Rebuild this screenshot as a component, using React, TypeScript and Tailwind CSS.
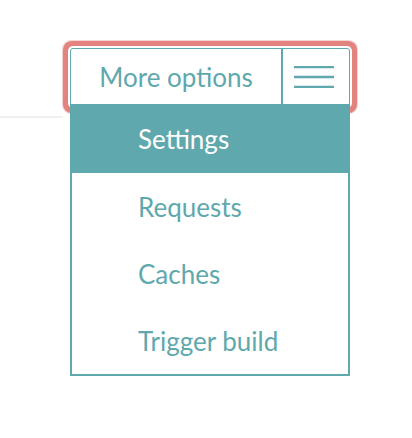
import React, { useState } from "react";

const items = ["Settings", "Requests", "Caches", "Trigger build"];

const HamburgerIcon = () => (
    <svg width="40" height="22" viewBox="0 0 40 22" fill="none">
        <path
            d="M0 1H40M0 11H40M0 21H40"
            stroke="#5fa8ad"
            strokeWidth="2.4"
        />
    </svg>
);

const App = () => {
    const [active, setActive] = useState("Settings");

    return (
        <div
            className="min-h-screen bg-white"
            style={{ fontFamily: "Lato, 'Open Sans', sans-serif" }}
        >
            <div className="flex items-start pt-[48px]">
                <div className="w-[63px] h-[2px] bg-[#f0f0f0] mt-[68px]" />
                <div className="relative ml-[7px]">
                    <div className="flex h-[58px] w-[280px] rounded-[3px] border border-[#5fa8ad] bg-white shadow-[0_0_0_2px_#ffffff,0_0_0_7px_#e2837f,0_0_0_8px_rgba(226,131,127,0.35)]">
                        <button className="flex-1 text-[26px] text-[#5fa8ad] leading-none">
                            More options
                        </button>
                        <button className="w-[68px] flex items-center justify-center border-l-2 border-[#5fa8ad] pr-[4px]">
                            <HamburgerIcon />
                        </button>
                    </div>
                    <div className="absolute left-0 top-[56px] w-[280px] border-2 border-t-0 border-[#5fa8ad] bg-white">
                        {items.map((item, i) => (
                            <button
                                key={item}
                                onClick={() => setActive(item)}
                                className={`flex w-full items-center pl-[66px] text-[26px] leading-none ${
                                    i === 0 ? "h-[69px]" : "h-[67px]"
                                } ${
                                    active === item
                                        ? "bg-[#5fa8ad] text-white"
                                        : "text-[#5fa8ad]"
                                }`}
                            >
                                {item}
                            </button>
                        ))}
                    </div>
                </div>
            </div>
        </div>
    );
};

export default App;
